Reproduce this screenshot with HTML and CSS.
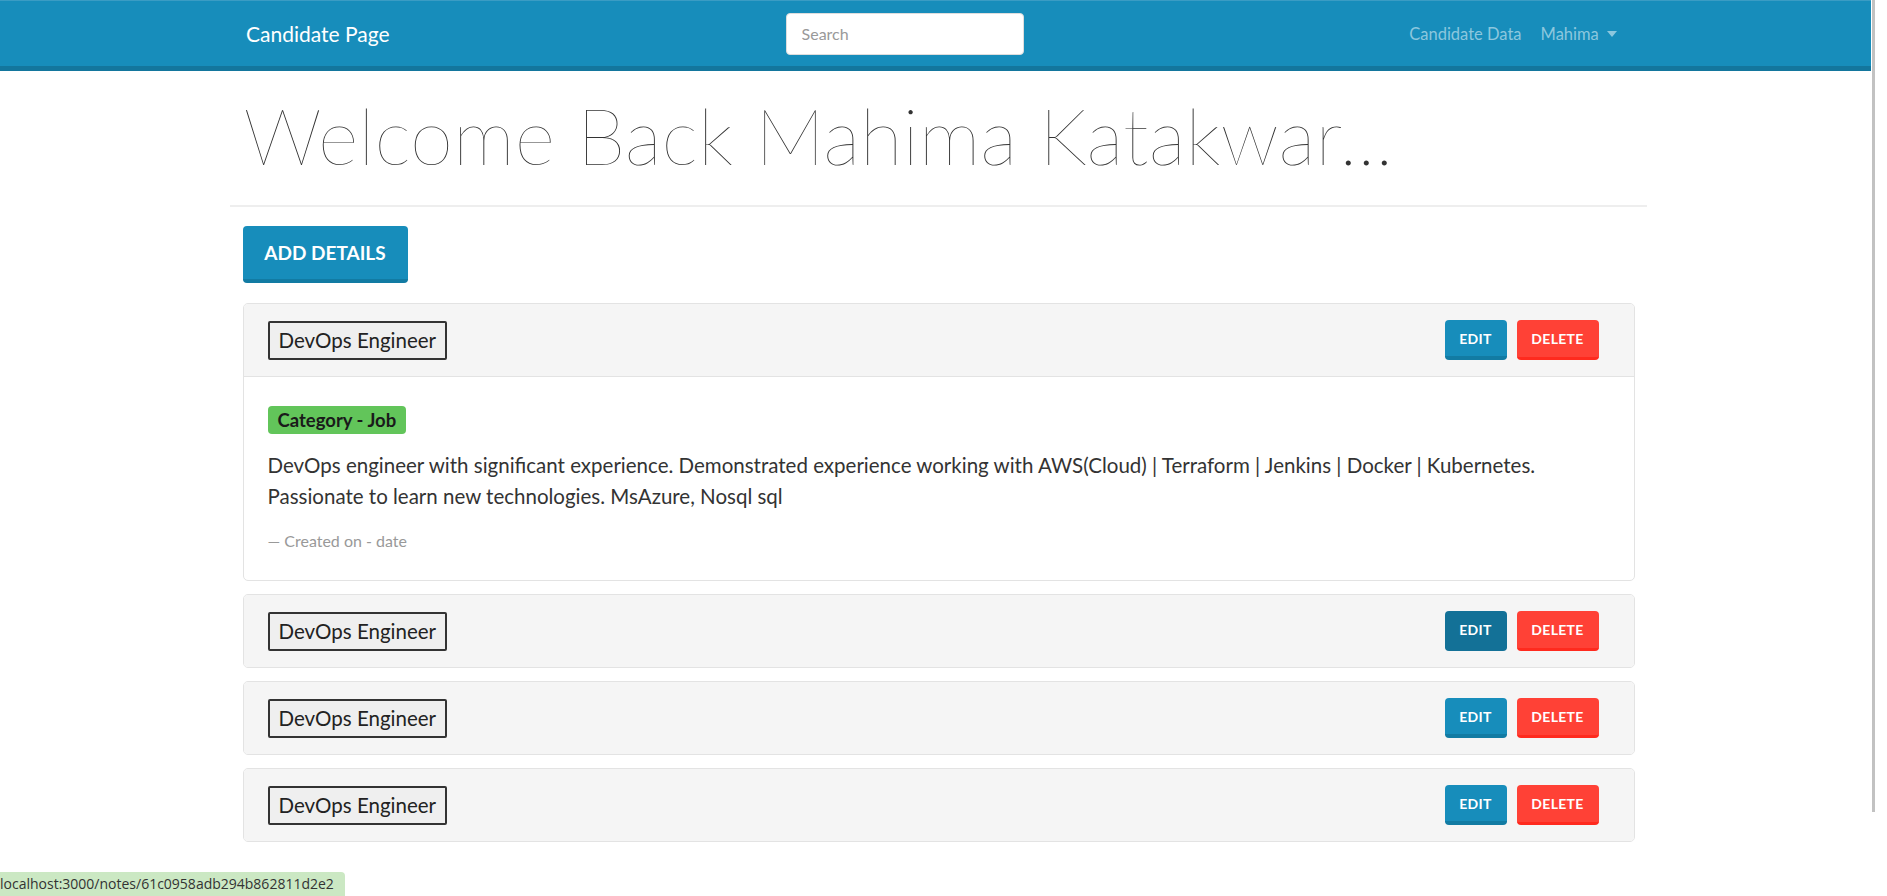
FILE: index.html
```html
<!DOCTYPE html>
<html lang="en">
<head>
    <meta charset="UTF-8">
    <meta name="viewport" content="width=device-width, initial-scale=1.0">
    <title>Candidate Page</title>
    <link rel="stylesheet" href="styles.css">
</head>
<body>
    <nav class="navbar">
        <div class="nav-inner">
            <a class="brand" href="#">Candidate Page</a>
            <input type="text" class="search" placeholder="Search">
            <div class="nav-links">
                <a href="#">Candidate Data</a>
                <a href="#" class="dropdown">Mahima <span class="caret"></span></a>
            </div>
        </div>
    </nav>

    <div class="container">
        <h1 class="welcome">Welcome Back Mahima Katakwar...</h1>
        <hr>

        <div class="content">
            <button class="btn btn-primary btn-lg">Add Details</button>

            <div class="card">
                <div class="card-header">
                    <button class="title-btn">DevOps Engineer</button>
                    <div class="actions">
                        <button class="btn btn-primary btn-sm">Edit</button>
                        <button class="btn btn-danger btn-sm">Delete</button>
                    </div>
                </div>
                <div class="card-body">
                    <span class="badge">Category - Job</span>
                    <p class="desc">DevOps engineer with significant experience. Demonstrated experience working with AWS(Cloud) | Terraform | Jenkins | Docker | Kubernetes.<br>Passionate to learn new technologies. MsAzure, Nosql sql</p>
                    <div class="created">— Created on - date</div>
                </div>
            </div>

            <div class="card">
                <div class="card-header">
                    <button class="title-btn">DevOps Engineer</button>
                    <div class="actions">
                        <button class="btn btn-primary btn-sm active">Edit</button>
                        <button class="btn btn-danger btn-sm">Delete</button>
                    </div>
                </div>
            </div>

            <div class="card">
                <div class="card-header">
                    <button class="title-btn">DevOps Engineer</button>
                    <div class="actions">
                        <button class="btn btn-primary btn-sm">Edit</button>
                        <button class="btn btn-danger btn-sm">Delete</button>
                    </div>
                </div>
            </div>

            <div class="card">
                <div class="card-header">
                    <button class="title-btn">DevOps Engineer</button>
                    <div class="actions">
                        <button class="btn btn-primary btn-sm">Edit</button>
                        <button class="btn btn-danger btn-sm">Delete</button>
                    </div>
                </div>
            </div>
        </div>
    </div>

    <div class="scrollbar"><div class="thumb"></div></div>
    <div class="status-bubble">localhost:3000/notes/61c0958adb294b862811d2e2</div>
</body>
</html>
```

FILE: styles.css
```css
body {
    margin: 0 11px 0 0;
    font-family: Lato, "Open Sans", sans-serif;
    color: #333;
    background: #fff;
}
.navbar {
    background: #178dbb;
    border-top: 1px solid #3a9cc4;
    border-bottom: 5px solid #13769d;
    box-sizing: border-box;
    height: 71px;
    margin-right: 5px;
}
.nav-inner {
    width: 1417px;
    margin: 0 auto;
    display: flex;
    align-items: center;
    height: 65px;
}
.brand {
    margin-left: 19px;
    color: #fff;
    font-size: 21px;
    text-decoration: none;
}
.search {
    margin-left: 396px;
    width: 238px;
    height: 42px;
    box-sizing: border-box;
    border: 1px solid #ddd;
    border-radius: 4px;
    padding: 0 15px;
    font-family: Lato, sans-serif;
    font-size: 16px;
}
.search::placeholder {
    color: #999;
}
.nav-links {
    margin-left: auto;
    margin-right: 27px;
    display: flex;
    gap: 19px;
}
.nav-links a {
    color: #8cc7de;
    font-size: 16.5px;
    text-decoration: none;
}
.caret {
    display: inline-block;
    margin-left: 4px;
    vertical-align: 3px;
    border-top: 6px solid #8cc7de;
    border-left: 5px solid transparent;
    border-right: 5px solid transparent;
}
.container {
    width: 1417px;
    margin: 0 auto;
}
.welcome {
    margin: 0;
    padding: 25px 0 0 14px;
    height: 112px;
    box-sizing: border-box;
    font-size: 78px;
    font-weight: 200;
    color: #333;
    line-height: 1;
    white-space: nowrap;
}
hr {
    margin: 22px 0 0;
    border: 0;
    border-top: 2px solid #eee;
}
.content {
    padding: 19px 12px 40px 13px;
}
.btn {
    font-family: Lato, sans-serif;
    font-weight: 700;
    text-transform: uppercase;
    color: #fff;
    border: 0;
    border-radius: 4px;
    cursor: pointer;
}
.btn-primary {
    background: #178dbb;
    border-bottom: 4px solid #127ba3;
}
.btn-primary.active {
    background: #137197;
    border-bottom-color: #137197;
}
.btn-danger {
    background: #ff4136;
    border-bottom: 3px solid #ff2a1e;
}
.btn-lg {
    width: 165px;
    height: 57px;
    font-size: 19px;
    margin-bottom: 20px;
}
.btn-sm {
    height: 40px;
    font-size: 14px;
    letter-spacing: 0.3px;
}
.btn-sm.btn-primary {
    width: 62px;
}
.btn-sm.btn-danger {
    width: 82px;
}
.card {
    border: 1px solid #e3e3e3;
    border-radius: 5px;
    margin-bottom: 13px;
    overflow: hidden;
}
.card-header {
    background: #f5f5f5;
    display: flex;
    align-items: center;
    justify-content: space-between;
    padding: 16px 35px 16px 24px;
    height: 72px;
    box-sizing: border-box;
}
.card-body {
    border-top: 1px solid #e3e3e3;
    padding: 29px 24px 27px;
}
.title-btn {
    height: 39px;
    padding: 0 9px;
    background: #efefef;
    border: 2px solid #333;
    border-radius: 2px;
    font-family: Lato, sans-serif;
    font-size: 20.5px;
    color: #222;
}
.actions {
    display: flex;
    gap: 10px;
}
.badge {
    display: inline-block;
    background: #62c55a;
    color: #1a1a1a;
    font-weight: 700;
    font-size: 18.5px;
    padding: 0 10px;
    line-height: 28px;
    border-radius: 4px;
}
.desc {
    margin: 16px 0 0;
    font-size: 20.5px;
    line-height: 31px;
    color: #333;
}
.created {
    margin-top: 17px;
    font-size: 16px;
    line-height: 24px;
    color: #999;
}
.scrollbar {
    position: fixed;
    top: 0;
    right: 0;
    bottom: 0;
    width: 16px;
    background: #fff;
}
.thumb {
    margin-left: 1px;
    width: 3px;
    height: 812px;
    background: #c2c2c2;
}
.status-bubble {
    position: fixed;
    left: 0;
    bottom: 0;
    width: 345px;
    height: 24px;
    box-sizing: border-box;
    background: #cbe8c3;
    border-top-right-radius: 4px;
    font-family: "Open Sans", sans-serif;
    font-size: 14px;
    line-height: 24px;
    color: #333;
    white-space: nowrap;
    overflow: hidden;
}
```
